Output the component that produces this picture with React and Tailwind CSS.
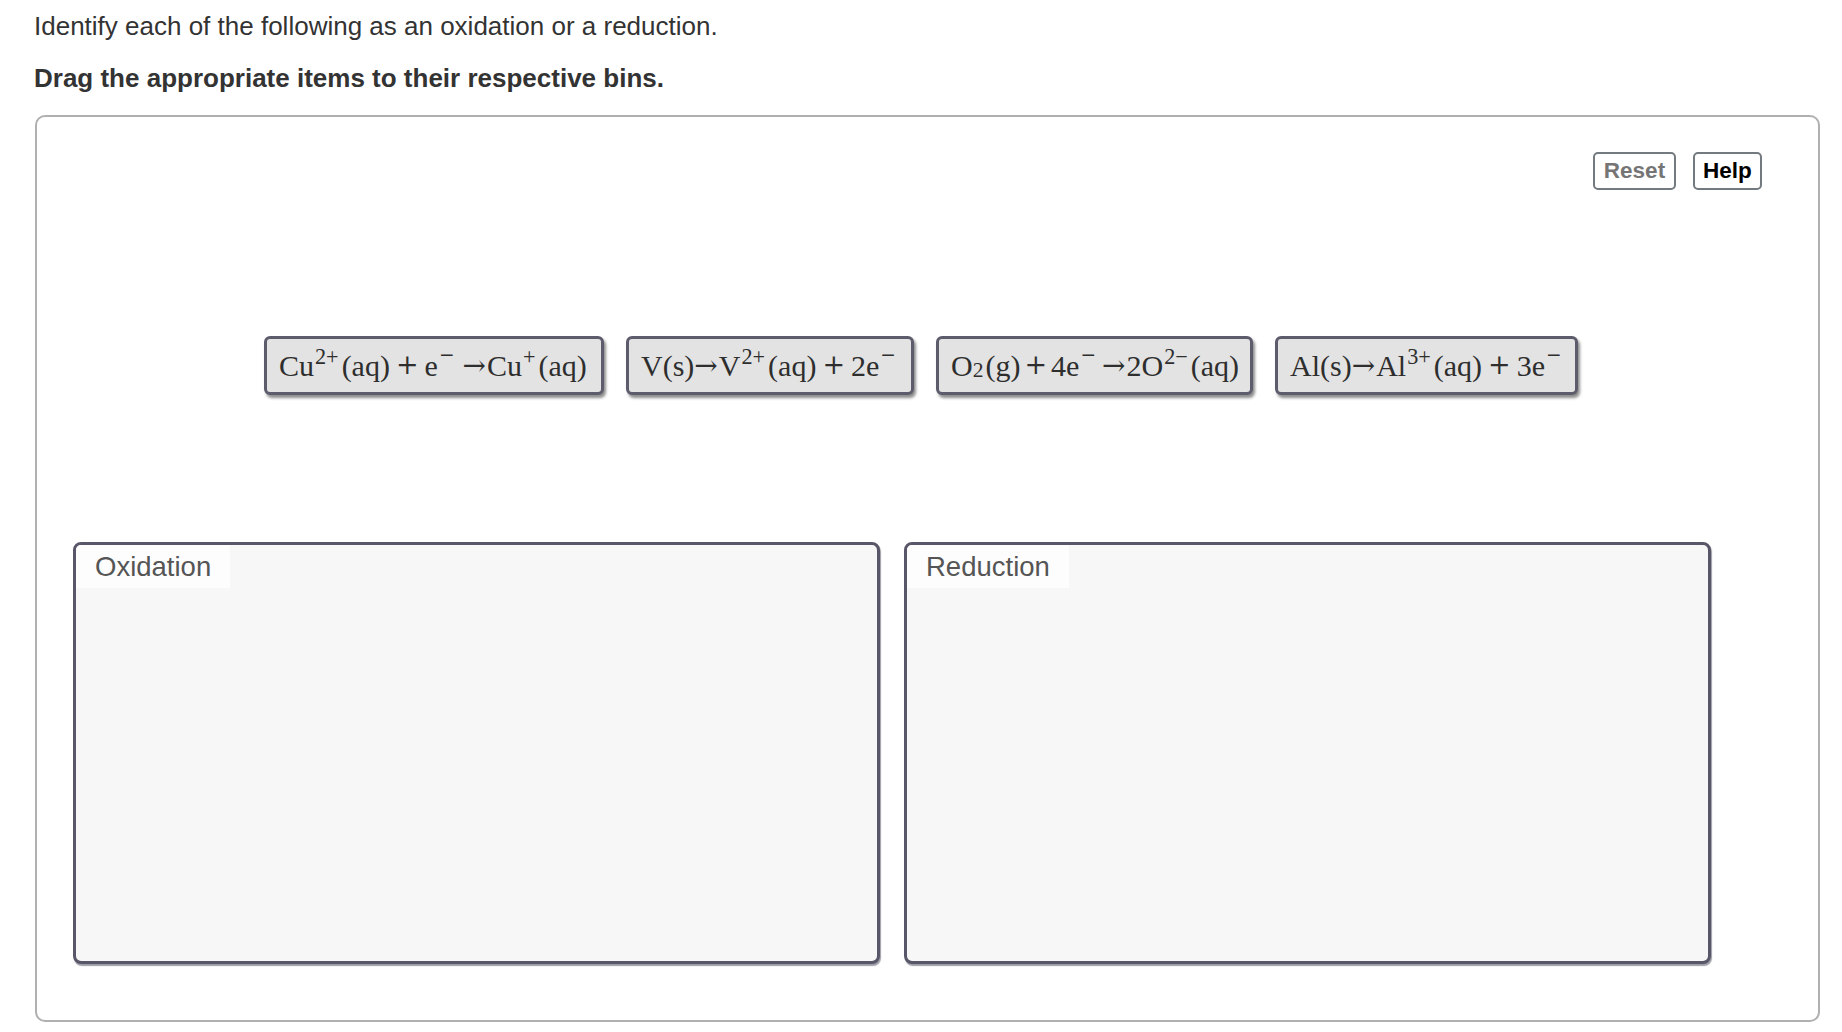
import React from "react";

const sans = { fontFamily: '"Liberation Sans", Arial, Helvetica, sans-serif' };
const serif = { fontFamily: '"Liberation Serif", "Times New Roman", serif' };
const dv = { fontFamily: '"DejaVu Serif", serif' };

function Sup({ children }) {
  return (
    <sup className="text-[74%] ml-[1px] mr-[3px] -top-[0.4em]">{children}</sup>
  );
}
function Minus({ tight = false }) {
  return (
    <sup className={(tight ? "mr-[1px] " : "mr-[3px] ") + "text-[62%] ml-[1px] -top-[0.55em]"} style={dv}>
      −
    </sup>
  );
}
function Sub({ children }) {
  return <sub className="text-[72%] mr-[2px] -bottom-[0.2em]">{children}</sub>;
}
function Plus({ tight = false }) {
  return (
    <span className={(tight ? "mx-[4px] " : "mx-[6px] ") + "text-[27px]"} style={dv}>
      +
    </span>
  );
}
function Arrow({ pre = true }) {
  return (
    <span className={(pre ? "ml-[5px] " : "") + "mr-[1px] text-[28px]"} style={dv}>
      →
    </span>
  );
}

function Chip({ width, children }) {
  return (
    <div
      className="h-[59px] flex items-center pl-[12px] rounded-[6px] border-[3px] border-[#5c5c6c] bg-[#e3e3e3] text-[#2e2e2e] text-[30px] whitespace-nowrap shadow-[2px_3px_3px_rgba(0,0,0,0.45)]"
      style={{ ...serif, width }}
    >
      {children}
    </div>
  );
}

function Bin({ label }) {
  return (
    <div className="w-[807px] h-[422px] rounded-[8px] border-[3px] border-[#575769] bg-[#f7f7f7] shadow-[1px_2px_1px_rgba(60,60,80,0.5)] overflow-hidden">
      <div className="w-fit h-[43px] bg-[#fdfdfd] px-[19px] flex items-center text-[27.5px] text-[#555555]">
        {label}
      </div>
    </div>
  );
}

export default function App() {
  return (
    <div className="w-[1842px] h-[1032px] bg-white pl-[34px] pt-[11px]" style={sans}>
      <p className="text-[26px] leading-[30px] text-[#333333]">
        Identify each of the following as an oxidation or a reduction.
      </p>
      <p className="mt-[22px] text-[26px] leading-[30px] font-bold text-[#333333]">
        Drag the appropriate items to their respective bins.
      </p>
      <div className="mt-[22px] ml-px w-[1785px] h-[907px] rounded-[10px] border-2 border-[#b0b0b0] pt-[35px] pl-[36px] pr-[56px]">
        <div className="flex justify-end gap-[17px]">
          <button className="h-[38px] w-[83px] rounded-[5px] border-2 border-[#737b80] bg-white text-[22.5px] font-bold text-[#757575] flex items-center justify-center">
            Reset
          </button>
          <button className="h-[38px] w-[69px] rounded-[5px] border-2 border-[#737b80] bg-white text-[22.5px] font-bold text-black flex items-center justify-center">
            Help
          </button>
        </div>
        <div className="mt-[146px] flex gap-[22px] pl-[191px]">
          <Chip width={340}>
            Cu<Sup>2+</Sup>(aq)<Plus />e<Minus /><Arrow />Cu<Sup>+</Sup>(aq)
          </Chip>
          <Chip width={288}>
            V(s)<Arrow pre={false} />V<Sup>2+</Sup>(aq)<Plus />2e<Minus />
          </Chip>
          <Chip width={317}>
            O<Sub>2</Sub>(g)<Plus tight />4e<Minus tight /><Arrow />2O<Sup>2−</Sup>(aq)
          </Chip>
          <Chip width={303}>
            Al(s)<Arrow pre={false} />Al<Sup>3+</Sup>(aq)<Plus />3e<Minus />
          </Chip>
        </div>
        <div className="mt-[147px] flex gap-[24px]">
          <Bin label="Oxidation" />
          <Bin label="Reduction" />
        </div>
      </div>
    </div>
  );
}
